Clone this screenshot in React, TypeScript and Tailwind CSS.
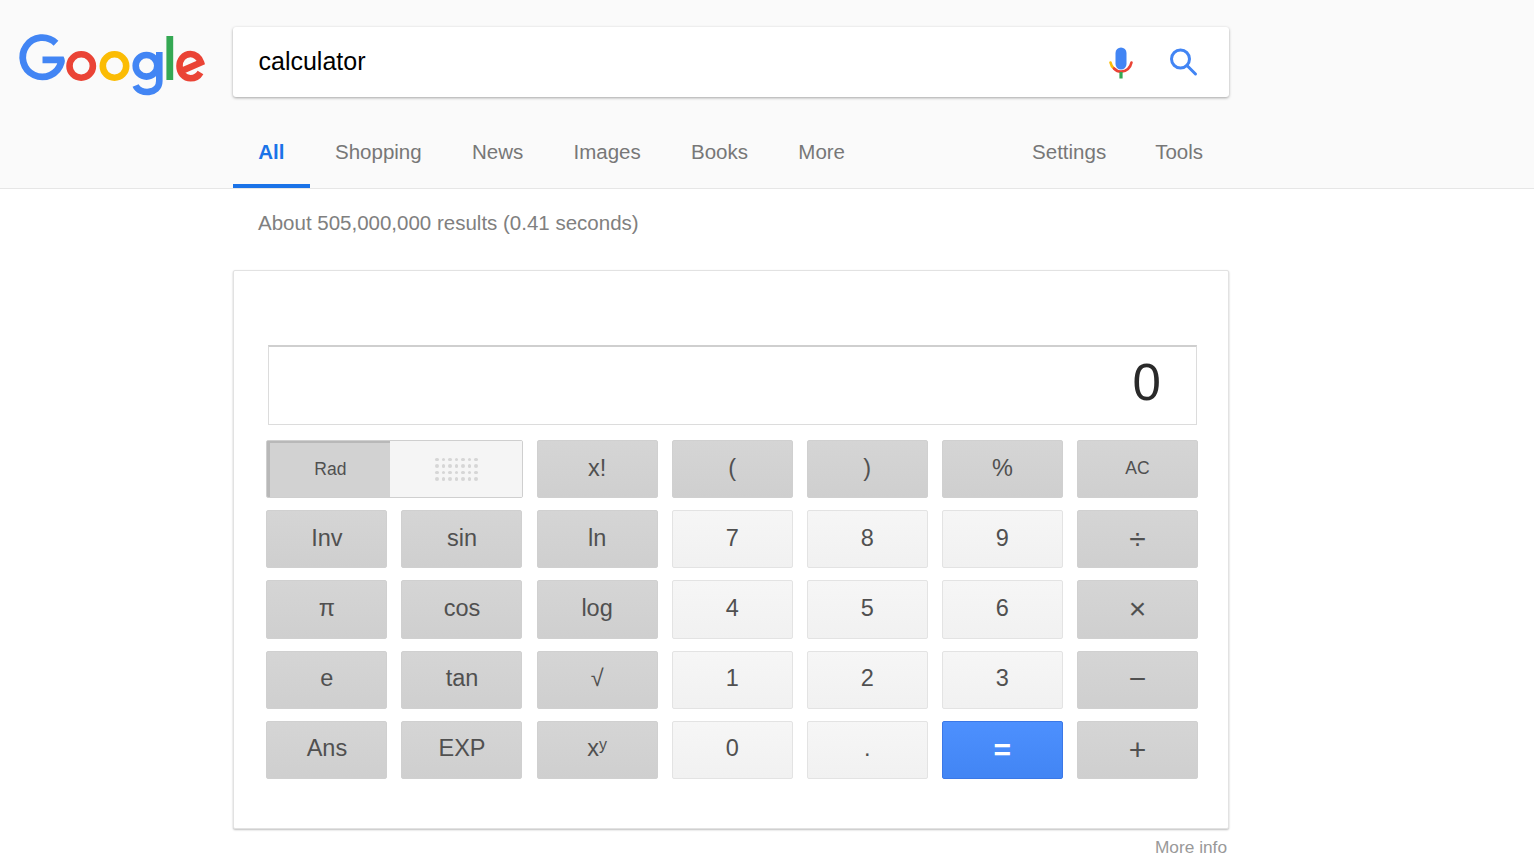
import React from "react";

type Kind = "d" | "l" | "b";
type Key = { t: React.ReactNode; k: Kind; size?: string };

const big = "text-[30px]";
const small = "text-[17.5px]";

const rows: Key[][] = [
  [{ t: "x!", k: "d" }, { t: "(", k: "d" }, { t: ")", k: "d" }, { t: "%", k: "d" }, { t: "AC", k: "d", size: small }],
  [{ t: "Inv", k: "d" }, { t: "sin", k: "d" }, { t: "ln", k: "d" }, { t: "7", k: "l" }, { t: "8", k: "l" }, { t: "9", k: "l" }, { t: "÷", k: "d", size: big }],
  [{ t: "π", k: "d" }, { t: "cos", k: "d" }, { t: "log", k: "d" }, { t: "4", k: "l" }, { t: "5", k: "l" }, { t: "6", k: "l" }, { t: "×", k: "d", size: big }],
  [{ t: "e", k: "d" }, { t: "tan", k: "d" }, { t: "√", k: "d" }, { t: "1", k: "l" }, { t: "2", k: "l" }, { t: "3", k: "l" }, { t: "−", k: "d", size: big }],
  [
    { t: "Ans", k: "d" },
    { t: "EXP", k: "d" },
    { t: <span className="relative">x<span className="text-[16px] relative -top-[6px]">y</span></span>, k: "d" },
    { t: "0", k: "l" },
    { t: ".", k: "l" },
    { t: "=", k: "b", size: big },
    { t: "+", k: "d", size: big },
  ],
];

function CalcKey({ item }: { item: Key }) {
  const tone =
    item.k === "d"
      ? "bg-gradient-to-b from-[#d5d5d5] to-[#cfcfcf] border-[#d0d0d0] text-[#505050]"
      : item.k === "l"
      ? "bg-gradient-to-b from-[#f6f6f6] to-[#f1f1f1] border-[#e3e3e3] text-[#505050]"
      : "bg-gradient-to-b from-[#4d90fe] to-[#4285f4] border-[#3b78e7] text-white font-bold";
  return (
    <div className={`flex items-center justify-center rounded-[2px] border pb-[1.5px] ${tone} ${item.size ?? "text-[23.5px]"}`}>
      {item.t}
    </div>
  );
}

function Logo() {
  return (
    <svg width="190" height="64" viewBox="17 33 190 64" fill="none" strokeWidth="6.6">
      <path d="M56 43.2A19.6 19.6 0 1 0 61.2 62.5C61.6 61 61.6 60.5 61.3 59.8L42.5 59.8" stroke="#4285F4" strokeWidth="6.8" />
      <circle cx="81.2" cy="66" r="11.7" stroke="#EA4335" />
      <circle cx="114.5" cy="66" r="11.7" stroke="#FBBC05" />
      <circle cx="146.5" cy="65.8" r="10.8" stroke="#4285F4" />
      <path d="M159.3 52V81C159.3 94.5 139.5 95 135.6 85.5" stroke="#4285F4" />
      <path d="M169.8 36V80" stroke="#34A853" strokeWidth="6.8" />
      <path d="M181.5 71L201 62.5C199.5 57.5 195 54 190.5 54C183.5 54 179.5 60 179.5 66C179.5 73 184.5 78.3 190.5 78.3C195 78.3 198.5 76 200.5 72.5" stroke="#EA4335" />
    </svg>
  );
}

function Mic() {
  return (
    <svg width="26" height="34" viewBox="0 0 26 34" fill="none">
      <rect x="7.5" y="0.5" width="11" height="22" rx="5.5" fill="#4285F4" />
      <path d="M2.5 15.5C3 18 4 20 6 21.5" stroke="#FBBC05" strokeWidth="2.6" strokeLinecap="round" />
      <path d="M6 21.5C8 23.6 10.5 24.6 13 24.6C18.5 24.6 22.5 20.5 23.5 15.5" stroke="#EA4335" strokeWidth="2.6" strokeLinecap="round" />
      <rect x="11.4" y="25" width="3.2" height="6.5" fill="#34A853" />
    </svg>
  );
}

function Search() {
  return (
    <svg width="30" height="30" viewBox="0 0 30 30" fill="none" stroke="#4285F4" strokeWidth="3">
      <circle cx="12.5" cy="12" r="9" />
      <path d="M19 18.5L27.5 27" strokeLinecap="round" />
    </svg>
  );
}

function Dots() {
  return (
    <div className="grid grid-cols-7 gap-x-[3px] gap-y-[3px]">
      {Array.from({ length: 28 }).map((_, i) => (
        <span key={i} className="w-[3.5px] h-[3.5px] rounded-full bg-[#d6d6d6]" />
      ))}
    </div>
  );
}

export default function App() {
  const tabs = ["Shopping", "News", "Images", "Books", "More"];
  return (
    <div className="w-[1534px] h-[864px] overflow-hidden bg-white font-['Liberation_Sans',Arial,sans-serif]">
      <header className="h-[189px] bg-[#fafafa] border-b border-[#e6e6e6] flex">
        <div className="w-[233px] shrink-0 pl-[17px] pt-[33px]">
          <Logo />
        </div>
        <div className="w-[996px] flex flex-col">
          <div className="mt-[27px] h-[70px] bg-white rounded-[3px] shadow-[0_1px_3px_rgba(0,0,0,0.35)] flex items-center pl-[25.5px] pr-[31px]">
            <span className="text-[25px] text-black flex-1">calculator</span>
            <div className="mr-[34px] mt-[3px]"><Mic /></div>
            <Search />
          </div>
          <nav className="flex-1 flex items-stretch text-[20.5px] text-[#777777]">
            <div className="w-[76.5px] flex items-center justify-center pt-[23px] border-b-[4px] border-[#1a73e8] text-[#1a73e8] font-bold">All</div>
            <div className="flex items-center pt-[23px] pb-[4px] pl-[25.5px] gap-[50.3px]">
              {tabs.map((t) => <span key={t}>{t}</span>)}
            </div>
            <div className="ml-auto flex items-center pt-[23px] pb-[4px] pr-[26px] gap-[49px]">
              <span>Settings</span>
              <span>Tools</span>
            </div>
          </nav>
        </div>
      </header>
      <main className="ml-[233px] w-[996px]">
        <p className="pl-[25px] pt-[22px] h-[81px] text-[20.5px] leading-[24px] text-[#808080]">About 505,000,000 results (0.41 seconds)</p>
        <section className="h-[559px] bg-white border border-[#e2e2e2] rounded-[2px] shadow-[0_1px_2px_rgba(0,0,0,0.25)] pt-[74px] pl-[32.4px] pr-[31px]">
          <div className="ml-[1.6px] h-[80px] w-[929px] border border-[#dcdcdc] border-t-2 border-t-[#cfcfcf] flex items-center justify-end pr-[35px] pb-[5px] text-[51px] text-[#2a2a2a]">0</div>
          <div className="mt-[15px] grid grid-cols-[repeat(7,121px)] grid-rows-[repeat(5,58.2px)] gap-x-[14.1px] gap-y-[12px]">
            <div className="col-span-2 flex rounded-[2px] border border-[#cfcfcf] overflow-hidden mr-[-1px]">
              <div className="w-[123px] flex items-center justify-center pb-[2px] bg-[#d2d2d2] border-l-[3px] border-t-[2px] border-[#b8b8b8] text-[17.5px] text-[#505050]">Rad</div>
              <div className="flex-1 flex items-center justify-center bg-[#f5f5f5]"><Dots /></div>
            </div>
            {rows.flat().map((item, i) => <CalcKey key={i} item={item} />)}
          </div>
        </section>
        <div className="text-right pr-[2px] pt-[8px] text-[17.3px] leading-[20px] text-[#999999]">More info</div>
      </main>
    </div>
  );
}
